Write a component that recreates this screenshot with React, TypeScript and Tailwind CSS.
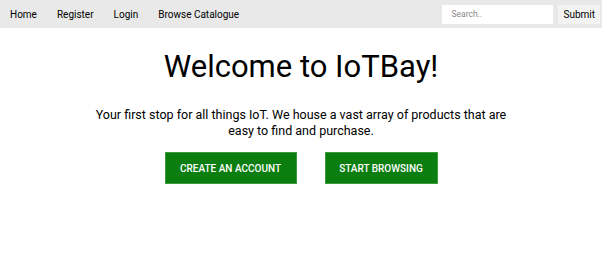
export default function App() {
  return (
    <div className="min-h-[280px] bg-white font-['Roboto',sans-serif] text-black">
      <nav className="h-7 bg-[#e9e9e9] flex items-center pl-[10px] pr-[2px]">
        <div className="flex gap-5 text-[10px]">
          <a href="#">Home</a>
          <a href="#">Register</a>
          <a href="#">Login</a>
          <a href="#">Browse Catalogue</a>
        </div>
        <div className="ml-auto flex items-center gap-[5px]">
          <input
            placeholder="Search.."
            className="w-[111px] h-[19px] bg-white px-[9px] text-[8.5px] outline-none placeholder:text-[#888]"
          />
          <button className="h-[19px] bg-[#f3f3f3] px-[5px] text-[10px]">Submit</button>
        </div>
      </nav>
      <main className="flex flex-col items-center">
        <h1 className="mt-[21px] text-[31px] leading-[36px]">Welcome to IoTBay!</h1>
        <p className="mt-[22px] w-[430px] text-center text-[12.5px] leading-[16px]">
          Your first stop for all things IoT. We house a vast array of products that are easy to find and purchase.
        </p>
        <div className="mt-[13px] flex gap-[28px]">
          <button className="h-8 w-[132px] bg-[#0b7e0f] text-white text-[10px] font-medium border border-[#3a9a3d]">
            CREATE AN ACCOUNT
          </button>
          <button className="h-8 w-[113px] bg-[#0b7e0f] text-white text-[10px] font-medium border border-[#3a9a3d]">
            START BROWSING
          </button>
        </div>
      </main>
    </div>
  )
}
